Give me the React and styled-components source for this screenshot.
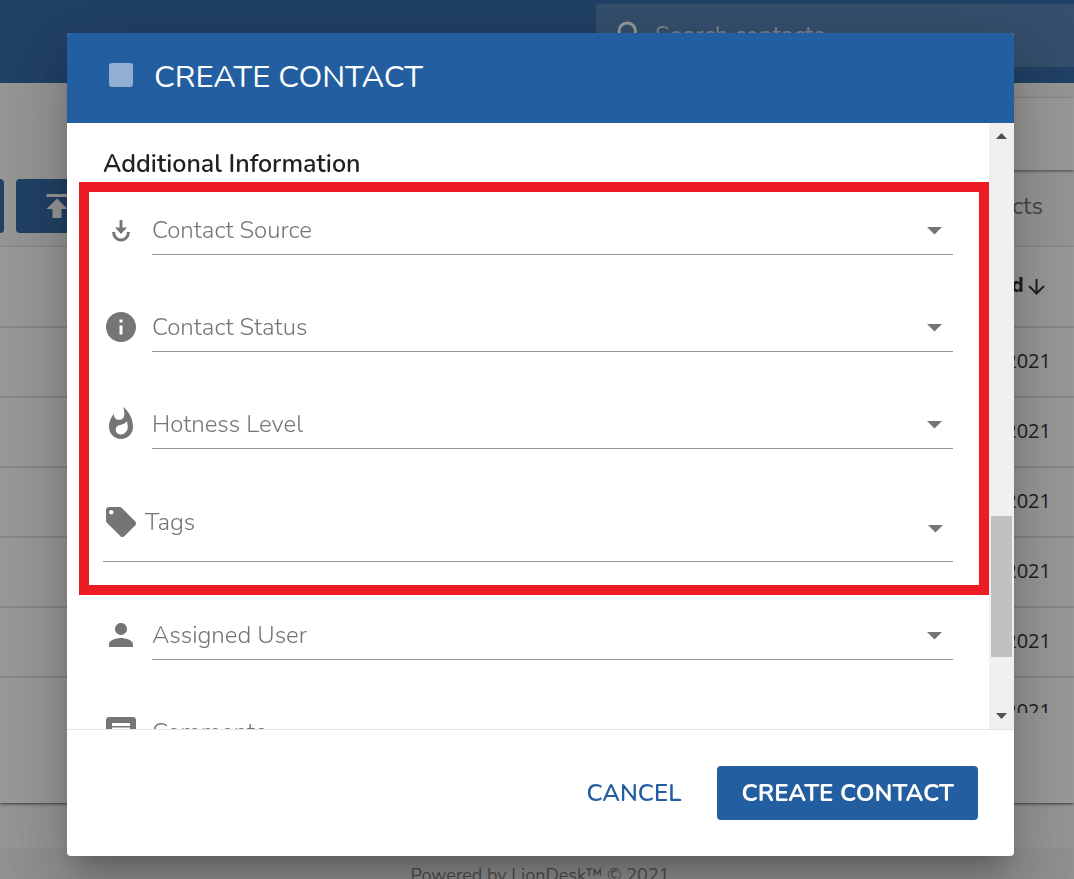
import React, { useState } from 'react';
import styled, { createGlobalStyle, ThemeProvider } from 'styled-components';
import {
  MdInfo,
  MdLocalOffer,
  MdMessage,
  MdPerson,
  MdPublish,
  MdSearch,
  MdWhatshot,
} from 'react-icons/md';

const theme = {
  colors: {
    primary: '#235fa0',
    highlight: '#ed1c24',
    text: '#212121',
    muted: '#757575',
    line: '#949494',
  },
  fonts: {
    main: "'Nunito', 'Open Sans', 'Noto Sans', sans-serif",
    table: "'Open Sans', 'Noto Sans', sans-serif",
  },
};

const GlobalStyle = createGlobalStyle`
  *, *::before, *::after { box-sizing: border-box; }
  html, body, #root { height: 100%; }
  body {
    margin: 0;
    overflow: hidden;
    font-family: ${theme.fonts.main};
    color: ${theme.colors.text};
  }
  button, input, select, textarea { font-family: inherit; }
`;

/* ---------- contacts page behind the dialog ---------- */

const Page = styled.div`
  display: flex;
  flex-direction: column;
  height: 100vh;
  overflow: hidden;
  background: #fafafa;
`;

const AppBar = styled.header`
  flex: none;
  display: flex;
  justify-content: flex-end;
  height: 83px;
  padding: 4px 0 16px;
  background: ${({ theme }) => theme.colors.primary};
`;

const SearchBox = styled.label`
  display: flex;
  align-items: center;
  gap: 4px;
  width: 478px;
  padding: 0 0 2px 17px;
  border-radius: 4px 0 0 4px;
  background: rgba(255, 255, 255, 0.16);
  color: #fff;
`;

const SearchInput = styled.input`
  flex: 1;
  min-width: 0;
  border: none;
  outline: none;
  background: transparent;
  color: #fff;
  font-size: 24px;

  &::placeholder { color: rgba(255, 255, 255, 0.7); }
`;

const FilterCard = styled.div`
  flex: none;
  height: 72px;
  margin: 15px 0 0 96px;
  background: #fff;
  box-shadow: 0 1px 3px rgba(0, 0, 0, 0.6);
`;

const ActionBar = styled.div`
  flex: none;
  display: flex;
  align-items: center;
  gap: 12px;
  height: 77px;
  margin-left: -80px;
  padding: 0 31px 6px 0;
`;

const ActionButton = styled.button`
  display: flex;
  align-items: center;
  justify-content: center;
  width: 84px;
  height: 54px;
  padding: 0 2px 0 0;
  border: none;
  border-radius: 4px;
  background: ${({ theme }) => theme.colors.primary};
  color: #fff;
`;

const ContactCount = styled.span`
  margin-left: auto;
  color: #6b6b6b;
  font-size: 24px;
`;

const TableCard = styled.div`
  flex: none;
  padding-bottom: 90px;
  background: #fff;
  box-shadow: 0 1px 3px rgba(0, 0, 0, 0.7);
`;

const TableScroll = styled.div`
  height: 466px;
  overflow: hidden;
`;

const Table = styled.table`
  width: 100%;
  border-collapse: collapse;
  font-family: ${({ theme }) => theme.fonts.table};
  font-size: 20px;

  th, td {
    height: 70px;
    padding: 0 23px 4px 0;
    border-bottom: 2px solid #dedede;
    text-align: right;
  }
  th { height: 80px; padding-right: 29px; }
  svg { margin-left: 4px; vertical-align: middle; }
`;

const PageFooter = styled.footer`
  flex: 1;
  margin-top: 45px;
  padding: 15px 0 0 6px;
  background: #f0f0f0;
  color: #777;
  font-size: 18px;
  line-height: 24px;
  text-align: center;
`;

/* ---------- dialog ---------- */

const Overlay = styled.div`
  position: fixed;
  inset: 0;
  display: flex;
  padding: 33px 60px 23px 67px;
  background: rgba(33, 33, 33, 0.46);
`;

const Dialog = styled.form`
  flex: 1;
  min-width: 0;
  display: flex;
  flex-direction: column;
  overflow: hidden;
  border-radius: 4px;
  background: #fff;
  box-shadow:
    0 16px 22px -10px rgba(0, 0, 0, 0.2),
    0 36px 57px 4px rgba(0, 0, 0, 0.14),
    0 14px 69px 12px rgba(0, 0, 0, 0.12);
`;

const DialogHeader = styled.header`
  flex: none;
  display: flex;
  align-items: center;
  gap: 21px;
  height: 90px;
  padding: 0 42px 6px;
  background: ${({ theme }) => theme.colors.primary};
  color: #fff;
`;

const HeaderMark = styled.span`
  width: 24px;
  height: 24px;
  border-radius: 3px;
  background: #92aed2;
`;

const DialogTitle = styled.h1`
  margin: 0;
  padding-top: 4px;
  font-size: 31px;
  font-weight: 400;
  line-height: 36px;
`;

const DialogBody = styled.div`
  flex: 1;
  min-height: 0;
  display: flex;
`;

const Fields = styled.div`
  flex: 1;
  min-width: 0;
  overflow: hidden;
`;

const SectionTitle = styled.h2`
  margin: 0;
  padding: 25px 36px 2px;
  font-size: 25px;
  font-weight: 600;
  line-height: 32px;
`;

const Highlight = styled.div`
  display: flex;
  flex-direction: column;
  gap: 34px;
  margin-left: 12px;
  padding: 0 26px 23px 14px;
  border: 10px solid ${({ theme }) => theme.colors.highlight};
`;

const PlainFields = styled.div`
  display: flex;
  flex-direction: column;
  gap: 34px;
  padding: 2px 36px 0;
`;

const FieldRow = styled.div`
  display: flex;
  flex: none;
  height: ${({ $tall }) => ($tall ? 79 : 63)}px;
  border-bottom: ${({ $tall, theme }) => ($tall ? `1px solid ${theme.colors.line}` : 'none')};
`;

const FieldIcon = styled.span`
  flex: none;
  width: ${({ $tall }) => ($tall ? 42 : 49)}px;
  padding-top: ${({ $tall }) => ($tall ? 21 : 20)}px;
  color: ${({ theme }) => theme.colors.muted};

  svg { display: block; }
`;

/* label, native control and caret share one grid cell */
const Control = styled.div`
  flex: 1;
  min-width: 0;
  display: grid;
  align-items: center;
  padding-top: ${({ $tall }) => ($tall ? 15 : 14)}px;
  padding-bottom: ${({ $tall }) => ($tall ? 15 : 0)}px;
  border-bottom: ${({ $tall, theme }) => ($tall ? 'none' : `1px solid ${theme.colors.line}`)};

  > * { grid-area: 1 / 1; }
`;

const Label = styled.label`
  color: ${({ theme }) => theme.colors.muted};
  font-size: 24px;
  font-weight: 300;
  line-height: 32px;
  pointer-events: none;
`;

const Select = styled.select`
  width: 100%;
  height: 48px;
  border: none;
  outline: none;
  appearance: none;
  background: transparent;
  font-size: 24px;
`;

const Textarea = styled.textarea`
  width: 100%;
  height: 48px;
  border: none;
  outline: none;
  resize: none;
  background: transparent;
  font-size: 24px;
`;

const Caret = styled.svg`
  justify-self: end;
  margin-right: ${({ $tall }) => ($tall ? 10 : 11)}px;
  margin-top: ${({ $tall }) => ($tall ? 14 : 2)}px;
  fill: ${({ theme }) => theme.colors.muted};
  pointer-events: none;
`;

const Scrollbar = styled.div`
  flex: none;
  display: flex;
  flex-direction: column;
  align-items: center;
  width: 25px;
  padding: 10px 0;
  background: #f0f0f0;

  svg { flex: none; fill: #505050; }
`;

const ScrollSpace = styled.div`
  flex: ${({ $size }) => $size} 0 0;
`;

const ScrollThumb = styled.div`
  flex: none;
  width: 21px;
  height: 141px;
  background: #c1c1c1;
`;

const DialogFooter = styled.footer`
  flex: none;
  display: flex;
  justify-content: flex-end;
  gap: 12px;
  padding: 36px;
  border-top: 1px solid #e5e5e5;
`;

const Button = styled.button`
  height: 54px;
  padding: 0 24px;
  border: none;
  border-radius: 4px;
  background: ${({ $filled, theme }) => ($filled ? theme.colors.primary : 'transparent')};
  color: ${({ $filled, theme }) => ($filled ? '#fff' : theme.colors.primary)};
  font-size: 24px;
  font-weight: ${({ $filled }) => ($filled ? 700 : 600)};
  white-space: nowrap;
  cursor: pointer;
`;

const SourceIcon = () => (
  <svg width="36" height="36" viewBox="0 0 36 36" fill="currentColor">
    <path d="M16.6 8h2.8v7.4H24L18 22 12 15.4h4.6z" />
    <path d="M10.6 20a7.4 8 0 0 0 14.8 0" fill="none" stroke="currentColor" strokeWidth="3" />
  </svg>
);

const SelectField = ({ id, label, icon, tall }) => (
  <FieldRow $tall={tall}>
    <FieldIcon $tall={tall}>{icon}</FieldIcon>
    <Control $tall={tall}>
      <Select id={id} defaultValue="">
        <option value="" aria-label="None" />
      </Select>
      <Label htmlFor={id}>{label}</Label>
      <Caret $tall={tall} width="15" height="8" viewBox="0 0 15 8">
        <path d="M0 0h15L7.5 7.5z" />
      </Caret>
    </Control>
  </FieldRow>
);

const dates = ['2021', '2021', '2021', '2021', '2021', '2021'];

const ContactsPage = () => (
  <Page>
    <AppBar>
      <SearchBox>
        <MdSearch size={36} />
        <SearchInput type="text" placeholder="Search contacts" aria-label="Search contacts" />
      </SearchBox>
    </AppBar>
    <FilterCard />
    <ActionBar>
      <ActionButton type="button" aria-label="Add" />
      <ActionButton type="button" aria-label="Import">
        <MdPublish size={36} />
      </ActionButton>
      <ContactCount>Contacts</ContactCount>
    </ActionBar>
    <TableCard>
      <TableScroll>
        <Table>
          <thead>
            <tr>
              <th>
                Created
                <svg width="17" height="17" viewBox="0 0 17 17" fill="none" stroke="currentColor" strokeWidth="2">
                  <path d="M8.5 1v14M1 8l7.5 7.5L16 8" />
                </svg>
              </th>
            </tr>
          </thead>
          <tbody>
            {dates.map((date, i) => (
              <tr key={i}>
                <td>{date}</td>
              </tr>
            ))}
          </tbody>
        </Table>
      </TableScroll>
    </TableCard>
    <PageFooter>Powered by LionDesk™ © 2021</PageFooter>
  </Page>
);

const CreateContactDialog = () => {
  const [comments, setComments] = useState('');

  return (
    <Overlay>
      <Dialog role="dialog" aria-labelledby="dialog-title" onSubmit={(e) => e.preventDefault()}>
        <DialogHeader>
          <HeaderMark />
          <DialogTitle id="dialog-title">CREATE CONTACT</DialogTitle>
        </DialogHeader>
        <DialogBody>
          <Fields>
            <SectionTitle>Additional Information</SectionTitle>
            <Highlight>
              <SelectField id="source" label="Contact Source" icon={<SourceIcon />} />
              <SelectField id="status" label="Contact Status" icon={<MdInfo size={36} />} />
              <SelectField id="hotness" label="Hotness Level" icon={<MdWhatshot size={36} />} />
              <SelectField id="tags" label="Tags" icon={<MdLocalOffer size={36} />} tall />
            </Highlight>
            <PlainFields>
              <SelectField id="user" label="Assigned User" icon={<MdPerson size={36} />} />
              <FieldRow>
                <FieldIcon>
                  <MdMessage size={36} />
                </FieldIcon>
                <Control>
                  <Textarea id="comments" value={comments} onChange={(e) => setComments(e.target.value)} />
                  {comments === '' && <Label htmlFor="comments">Comments</Label>}
                </Control>
              </FieldRow>
            </PlainFields>
          </Fields>
          <Scrollbar aria-hidden="true">
            <svg width="11" height="6" viewBox="0 0 11 6">
              <path d="M0 6h11L5.5 0z" />
            </svg>
            <ScrollSpace $size={377} />
            <ScrollThumb />
            <ScrollSpace $size={56} />
            <svg width="11" height="6" viewBox="0 0 11 6">
              <path d="M0 0h11L5.5 6z" />
            </svg>
          </Scrollbar>
        </DialogBody>
        <DialogFooter>
          <Button type="button">CANCEL</Button>
          <Button type="submit" $filled>CREATE CONTACT</Button>
        </DialogFooter>
      </Dialog>
    </Overlay>
  );
};

const App = () => (
  <ThemeProvider theme={theme}>
    <GlobalStyle />
    <ContactsPage />
    <CreateContactDialog />
  </ThemeProvider>
);

export default App;
